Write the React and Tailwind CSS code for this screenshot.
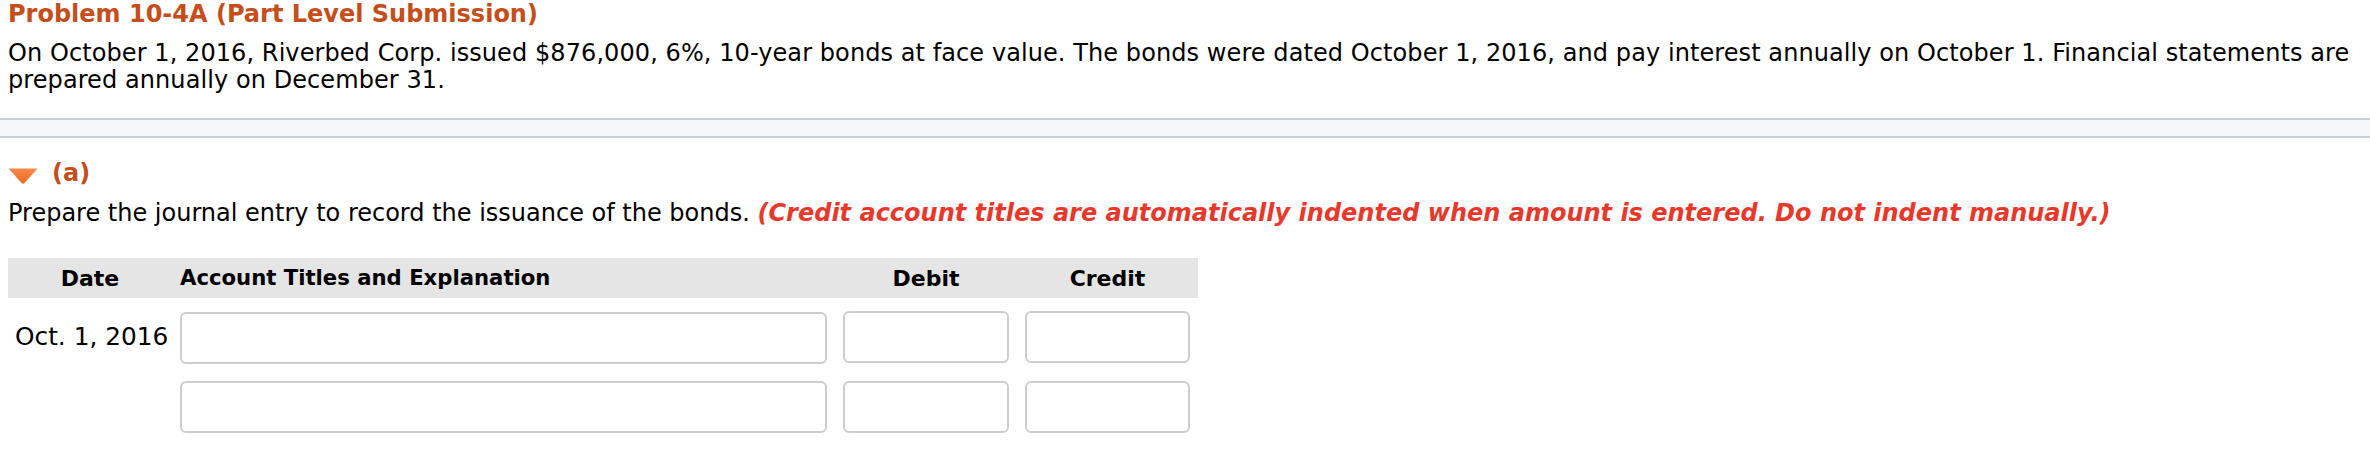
import React from "react";

function Input({ className = "" }) {
  return (
    <div className={"h-[52px] w-full rounded-[6px] border-2 border-[#cdcdcd] bg-white " + className} />
  );
}

export default function App() {
  return (
    <div className="w-[2370px] h-[460px] bg-white text-black font-['Verdana','DejaVu_Sans',sans-serif]">
      <div className="px-[8px] pt-[0px]">
        <div className="text-[24px] leading-[28px] font-bold text-[#c44e1c]">
          Problem 10-4A (Part Level Submission)
        </div>
        <p className="mt-[12px] text-[24px] leading-[27px] tracking-[0.08px] text-black">
          On October 1, 2016, Riverbed Corp. issued $876,000, 6%, 10-year bonds at face value. The bonds were dated October 1, 2016, and pay interest annually on October 1. Financial statements are prepared annually on December 31.
        </p>
      </div>

      <div className="mt-[24px] h-[20px] border-y-2 border-[#c9d0da] bg-[#f5f7f9]" />

      <div className="px-[8px]">
        <div className="mt-[22px] flex items-center gap-[14px] text-[24px] leading-[27px]">
          <svg width="30" height="16" viewBox="0 0 30 16" className="shrink-0 mt-[4px]">
            <defs>
              <linearGradient id="tri" x1="0" y1="0" x2="0" y2="1">
                <stop offset="0" stopColor="#f7884a" />
                <stop offset="1" stopColor="#f06a24" />
              </linearGradient>
            </defs>
            <path d="M0.5 0.5 L29.5 0.5 L16 15.5 L14 15.5 Z" fill="url(#tri)" />
          </svg>
          <span className="font-bold text-[#c44e1c]">(a)</span>
        </div>

        <p className="mt-[13px] text-[24px] leading-[27px]">
          Prepare the journal entry to record the issuance of the bonds.{" "}
          <span className="font-bold italic text-[#e8382b]">
            (Credit account titles are automatically indented when amount is entered. Do not indent manually.)
          </span>
        </p>

        <div className="mt-[31px] w-[1190px]">
          <div className="grid grid-cols-[164px_663px_182px_181px] h-[40px] items-center bg-[#e5e5e5] text-[22px] font-bold">
            <div className="text-center">Date</div>
            <div className="px-[8px] text-[21.2px]">Account Titles and Explanation</div>
            <div className="text-center">Debit</div>
            <div className="text-center">Credit</div>
          </div>

          <div className="mt-[12px] grid grid-cols-[164px_663px_182px_181px] items-center text-[24px]">
            <div className="pl-[7px] text-[24.8px]">Oct. 1, 2016</div>
            <div className="px-[8px] pt-[2px]"><Input /></div>
            <div className="px-[8px]"><Input /></div>
            <div className="px-[8px]"><Input /></div>
          </div>

          <div className="mt-[17px] grid grid-cols-[164px_663px_182px_181px] items-center text-[24px]">
            <div />
            <div className="px-[8px]"><Input /></div>
            <div className="px-[8px]"><Input /></div>
            <div className="px-[8px]"><Input /></div>
          </div>
        </div>
      </div>
    </div>
  );
}
